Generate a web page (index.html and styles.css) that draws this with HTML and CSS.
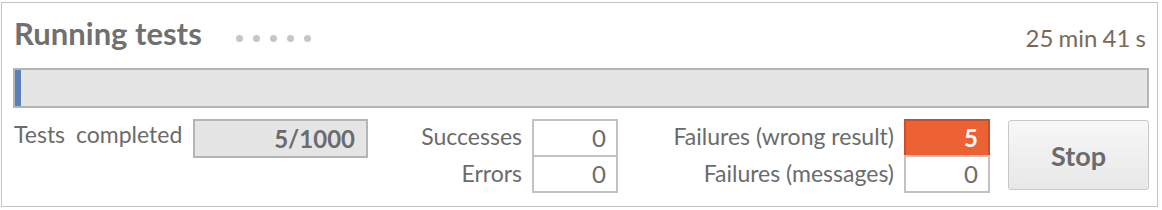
FILE: index.html
```html
<!DOCTYPE html>
<html lang="en">
<head>
    <meta charset="UTF-8">
    <title>Running tests</title>
    <link rel="stylesheet" href="styles.css">
</head>
<body>
    <div class="panel">
        <div class="header">
            <div class="title">Running tests</div>
            <div class="dots">
                <span></span><span></span><span></span><span></span><span></span>
            </div>
            <div class="elapsed">25 min 41 s</div>
        </div>

        <div class="progress">
            <div class="progress-fill" style="width: 6px"></div>
        </div>

        <div class="summary">
            <div class="completed">
                <div class="completed-label">Tests completed</div>
                <div class="completed-value">5/1000</div>
            </div>

            <div class="counts counts-left">
                <div class="count-label">Successes</div>
                <div class="count-value">0</div>
                <div class="count-label">Errors</div>
                <div class="count-value second">0</div>
            </div>

            <div class="counts counts-right">
                <div class="count-label">Failures (wrong result)</div>
                <div class="count-value alert">5</div>
                <div class="count-label">Failures (messages)</div>
                <div class="count-value second">0</div>
            </div>

            <button class="stop">Stop</button>
        </div>
    </div>
</body>
</html>
```

FILE: styles.css
```css
body {
    margin: 0;
    font-family: Lato, "Open Sans", sans-serif;
    color: #6b6b6b;
    background-color: #fff;
}

.panel {
    margin: 2px 4px 3px 1px;
    border: 1px solid #c4c4c4;
    padding: 0 8px 13px 11px;
}

.header {
    display: flex;
    align-items: flex-start;
    height: 65px;
}

.title {
    margin-top: 11px;
    padding-left: 1px;
    font-size: 31px;
    line-height: 38px;
    font-weight: bold;
    color: #707070;
}

.dots {
    display: flex;
    gap: 10px;
    margin-top: 32px;
    margin-left: 34px;
}

.dots span {
    width: 7px;
    height: 7px;
    border-radius: 50%;
    background-color: #c6c6c6;
}

.elapsed {
    margin-left: auto;
    margin-top: 21px;
    margin-right: 3px;
    font-size: 24px;
    line-height: 28px;
    word-spacing: -1px;
    color: #7a6a55;
}

.progress {
    height: 36px;
    border: 2px solid #b5b5b5;
    background-color: #e5e5e5;
}

.progress-fill {
    height: 100%;
    background-color: #5a7eb8;
}

.summary {
    display: flex;
    align-items: flex-start;
    margin-top: 11px;
}

.completed {
    display: flex;
    align-items: flex-start;
}

.completed-label {
    width: 180px;
    margin-top: 1px;
    padding-left: 1px;
    box-sizing: border-box;
    font-size: 23px;
    line-height: 28px;
    word-spacing: 5px;
}

.completed-value {
    width: 175px;
    height: 39px;
    box-sizing: border-box;
    border: 2px solid #b5b5b5;
    background-color: #e5e5e5;
    padding-right: 11px;
    text-align: right;
    font-size: 24px;
    line-height: 35px;
    font-weight: bold;
}

.counts {
    display: grid;
    column-gap: 10px;
    align-items: center;
}

.counts-left {
    grid-template-columns: 154px 86px;
}

.counts-right {
    grid-template-columns: 276px 86px;
}

.count-label {
    padding-bottom: 4px;
    text-align: right;
    font-size: 23px;
    line-height: 28px;
}

.count-value {
    height: 38px;
    box-sizing: border-box;
    border: 2px solid #c2c2c2;
    padding-right: 10px;
    text-align: right;
    font-size: 24px;
    line-height: 34px;
}

.count-value.second {
    margin-top: -2px;
}

.count-value.alert {
    background-color: #ec6235;
    border-color: #c9502a;
    color: #fff;
    font-weight: bold;
}

.stop {
    width: 141px;
    height: 70px;
    margin-left: 18px;
    margin-top: 1px;
    border: 1px solid #c8c8c8;
    border-radius: 3px;
    background: linear-gradient(#f7f7f7, #e8e8e8);
    font-family: inherit;
    font-size: 27px;
    font-weight: bold;
    color: #6b6b6b;
    cursor: pointer;
}
```
